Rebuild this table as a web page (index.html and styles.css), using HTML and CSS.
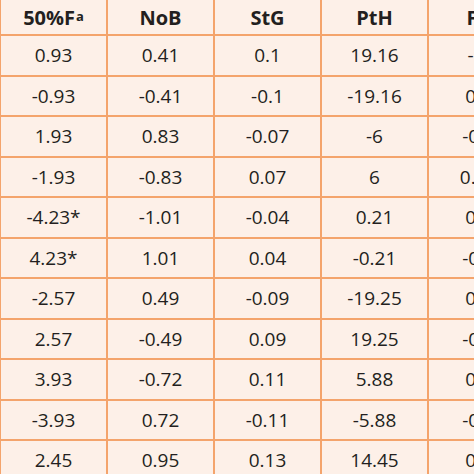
FILE: index.html
```html
<!DOCTYPE html>
<html>
<head>
<meta charset="utf-8">
<link rel="stylesheet" href="styles.css">
</head>
<body>
<div class="table">
  <div class="cell head">50%F<sup>a</sup></div>
  <div class="cell head">NoB</div>
  <div class="cell head">StG</div>
  <div class="cell head">PtH</div>
  <div class="cell head">FtH</div>

  <div class="cell">0.93</div><div class="cell">0.41</div><div class="cell">0.1</div><div class="cell">19.16</div><div class="cell">-1.2</div>
  <div class="cell">-0.93</div><div class="cell">-0.41</div><div class="cell">-0.1</div><div class="cell">-19.16</div><div class="cell">0.41</div>
  <div class="cell">1.93</div><div class="cell">0.83</div><div class="cell">-0.07</div><div class="cell">-6</div><div class="cell">-0.83</div>
  <div class="cell">-1.93</div><div class="cell">-0.83</div><div class="cell">0.07</div><div class="cell">6</div><div class="cell">0.837</div>
  <div class="cell">-4.23*</div><div class="cell">-1.01</div><div class="cell">-0.04</div><div class="cell">0.21</div><div class="cell">0.01</div>
  <div class="cell">4.23*</div><div class="cell">1.01</div><div class="cell">0.04</div><div class="cell">-0.21</div><div class="cell">-0.01</div>
  <div class="cell">-2.57</div><div class="cell">0.49</div><div class="cell">-0.09</div><div class="cell">-19.25</div><div class="cell">0.49</div>
  <div class="cell">2.57</div><div class="cell">-0.49</div><div class="cell">0.09</div><div class="cell">19.25</div><div class="cell">-0.49</div>
  <div class="cell">3.93</div><div class="cell">-0.72</div><div class="cell">0.11</div><div class="cell">5.88</div><div class="cell">0.72</div>
  <div class="cell">-3.93</div><div class="cell">0.72</div><div class="cell">-0.11</div><div class="cell">-5.88</div><div class="cell">-0.72</div>
  <div class="cell">2.45</div><div class="cell">0.95</div><div class="cell">0.13</div><div class="cell">14.45</div><div class="cell">0.95</div>
</div>
</body>
</html>
```
FILE: styles.css
```css
html, body {
  margin: 0;
  padding: 0;
  width: 474px;
  height: 474px;
  overflow: hidden;
  background: #fdf0e8;
}
.table {
  display: grid;
  grid-template-columns: repeat(4, 105px) 110px;
  grid-template-rows: 34px repeat(11, 38.5px);
  gap: 2px;
  padding-left: 2px;
  margin-left: -1px;
  width: max-content;
  background: #f4a46c;
  font-family: "Open Sans", "Noto Sans", sans-serif;
  color: #231f20;
}
.cell {
  background: #fdf0e8;
  display: flex;
  align-items: center;
  justify-content: center;
  font-size: 19px;
  white-space: nowrap;
}
.head {
  font-weight: 700;
  font-size: 20px;
  padding-top: 1px;
}
.head sup {
  font-size: 13px;
  position: relative;
  top: -1px;
  vertical-align: top;
  line-height: 1;
  margin-left: 1px;
}
```
